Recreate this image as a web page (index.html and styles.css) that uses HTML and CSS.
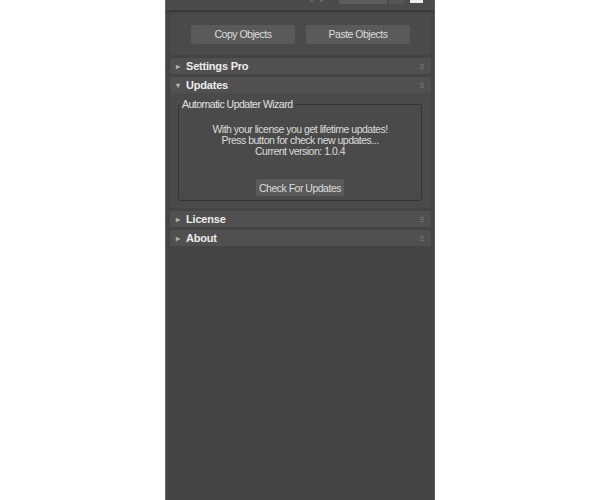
FILE: index.html
```html
<!DOCTYPE html>
<html lang="en">
<head>
  <meta charset="UTF-8" />
  <title>Copy Paste Objects</title>
  <link rel="stylesheet" href="styles.css">
</head>
<body>
  <div class="panel">
    <div class="top-strip">
      <span class="tick"></span>
      <span class="tick"></span>
      <span class="combo"></span>
      <span class="combo-arrow"></span>
      <span class="swatch"></span>
    </div>

    <div class="rollout tools">
      <button class="btn wide">Copy Objects</button>
      <button class="btn wide">Paste Objects</button>
    </div>

    <div class="rollout">
      <div class="rollout-head"><span class="arrow">&#9656;</span>Settings Pro<span class="grip"></span></div>
    </div>

    <div class="rollout">
      <div class="rollout-head"><span class="arrow">&#9662;</span>Updates<span class="grip"></span></div>
      <div class="rollout-body">
        <fieldset class="group">
          <legend>Automatic Updater Wizard</legend>
          <p class="info">With your license you get lifetime updates!<br>Press button for check new updates...<br>Current version: 1.0.4</p>
          <button class="btn small">Check For Updates</button>
        </fieldset>
      </div>
    </div>

    <div class="rollout">
      <div class="rollout-head"><span class="arrow">&#9656;</span>License<span class="grip"></span></div>
    </div>

    <div class="rollout">
      <div class="rollout-head"><span class="arrow">&#9656;</span>About<span class="grip"></span></div>
    </div>
  </div>
</body>
</html>
```

FILE: styles.css
```css
body {
  margin: 0;
  background: #ffffff;
  font-family: "Liberation Sans", Arial, sans-serif;
  font-size: 10.5px;
  letter-spacing: -0.5px;
  color: #dcdcdc;
}

.panel {
  width: 261px;
  height: 500px;
  margin: 0 auto;
  background: #444444;
  border-left: 1px solid #666666;
  border-right: 1px solid #5a5a5a;
  padding: 0 3px 0 4px;
  display: flex;
  flex-direction: column;
  gap: 3px;
}

.top-strip {
  height: 10px;
  background: #4b4b4b;
  border-bottom: 2px solid #3b3b3b;
  margin: 0 -3px -2px -4px;
  padding: 0 11px 0 0;
  display: flex;
  align-items: flex-start;
  justify-content: flex-end;
}

.tick {
  width: 3px;
  height: 2px;
  background: #666666;
  margin-right: 7px;
}

.tick + .tick {
  margin-right: 16px;
}

.combo {
  width: 48px;
  height: 4px;
  background: #5c5c5c;
}

.combo-arrow {
  width: 15px;
  height: 4px;
  background: #555555;
  margin-left: 2px;
}

.swatch {
  width: 13px;
  height: 3px;
  background: #eeeeee;
  margin-left: 6px;
}

.rollout {
  background: #4a4a4a;
  border-radius: 2px;
}

.tools {
  height: 42px;
  display: flex;
  justify-content: center;
  align-items: center;
  gap: 11px;
}

.btn {
  background: #5a5a5a;
  border: none;
  border-radius: 2px;
  color: #dcdcdc;
  font-family: "Liberation Sans", Arial, sans-serif;
  font-size: 10.5px;
  letter-spacing: -0.5px;
  white-space: nowrap;
  padding: 0;
}

.btn.wide {
  width: 104px;
  height: 19px;
}

.btn.small {
  width: 88px;
  height: 17px;
  margin-top: 22px;
}

.rollout-head {
  height: 16px;
  display: flex;
  align-items: center;
  background: #505050;
  border-radius: 2px;
  font-weight: bold;
  font-size: 11px;
  letter-spacing: -0.2px;
  color: #ececec;
}

.arrow {
  width: 16px;
  text-align: center;
  font-size: 8px;
  color: #b0b0b0;
}

.grip {
  margin-left: auto;
  margin-right: 7px;
  width: 4px;
  height: 5px;
  background: repeating-linear-gradient(#6c6c6c 0 1px, transparent 1px 2px);
}

.rollout-body {
  padding: 6px 9px 7px 8px;
}

.group {
  margin: 0;
  height: 102px;
  box-sizing: border-box;
  border: 1px solid #353535;
  border-radius: 2px;
  padding: 0;
  text-align: center;
}

.group legend {
  margin-left: 1px;
  padding: 0 3px 0 2px;
  line-height: 11px;
  text-align: left;
  color: #e2e2e2;
}

.info {
  margin: 14px 0 0;
  line-height: 11px;
}
```
